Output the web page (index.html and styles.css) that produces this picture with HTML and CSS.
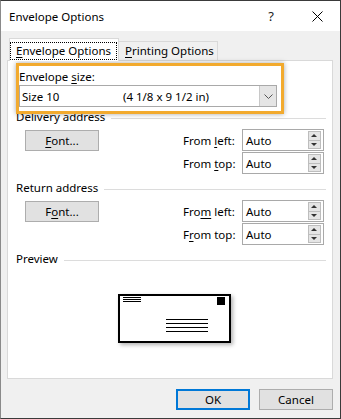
FILE: index.html
```html
<!DOCTYPE html>
<html lang="en">
<head>
    <meta charset="UTF-8">
    <title>Envelope Options</title>
    <link rel="stylesheet" href="styles.css">
</head>
<body>
    <div class="window">
        <div class="titlebar">
            <span class="title">Envelope Options</span>
            <span class="caption-btn">?</span>
            <span class="caption-btn">
                <svg width="11" height="11" viewBox="0 0 11 11"><path d="M0.5 0.5 L10.5 10.5 M10.5 0.5 L0.5 10.5" stroke="#000" stroke-width="1"/></svg>
            </span>
        </div>

        <div class="client">
            <div class="tabs">
                <div class="tab active"><span class="focus"><u>E</u>nvelope Options</span></div>
                <div class="tab"><u>P</u>rinting Options</div>
            </div>

            <div class="panel">
                <div class="highlight">
                    <div class="size-label">Envelope <u>s</u>ize:</div>
                    <div class="select">
                        <span class="select-name">Size 10</span>
                        <span class="select-dim">(4 1/8 x 9 1/2 in)</span>
                        <span class="drop-btn">
                            <svg width="9" height="5" viewBox="0 0 9 5"><path d="M0.5 0.5 L4.5 4.5 L8.5 0.5" fill="none" stroke="#555" stroke-width="1"/></svg>
                        </span>
                    </div>
                </div>

                <div class="group">
                    <div class="group-head"><span>Delivery address</span><span class="rule"></span></div>
                    <div class="fields">
                        <button class="btn font-btn"><u>F</u>ont...</button>
                        <span class="field-label">From <u>l</u>eft:</span>
                        <div class="spin-field"><span class="value">Auto</span><span class="spin"><i class="up"></i><i class="down"></i></span></div>
                        <span class="field-label">From <u>t</u>op:</span>
                        <div class="spin-field"><span class="value">Auto</span><span class="spin"><i class="up"></i><i class="down"></i></span></div>
                    </div>
                </div>

                <div class="group">
                    <div class="group-head"><span>Return address</span><span class="rule"></span></div>
                    <div class="fields">
                        <button class="btn font-btn">F<u>o</u>nt...</button>
                        <span class="field-label">Fro<u>m</u> left:</span>
                        <div class="spin-field"><span class="value">Auto</span><span class="spin"><i class="up"></i><i class="down"></i></span></div>
                        <span class="field-label">F<u>r</u>om top:</span>
                        <div class="spin-field"><span class="value">Auto</span><span class="spin"><i class="up"></i><i class="down"></i></span></div>
                    </div>
                </div>

                <div class="group">
                    <div class="group-head"><span>Preview</span><span class="rule"></span></div>
                    <div class="envelope">
                        <svg width="113" height="49" viewBox="0 0 113 49">
                            <rect x="1" y="1" width="111" height="47" fill="#fff" stroke="#000" stroke-width="2"/>
                            <path d="M5 3.5 H23 M5 5.5 H23 M5 7.5 H23" stroke="#000" stroke-width="1"/>
                            <rect x="99" y="3" width="8" height="8" fill="#000"/>
                            <path d="M48 25.5 H90 M48 29.5 H90 M48 33.5 H90 M48 37.5 H90" stroke="#000" stroke-width="1.2"/>
                        </svg>
                    </div>
                </div>
            </div>

            <div class="actions">
                <button class="btn default">OK</button>
                <button class="btn">Cancel</button>
            </div>
        </div>
    </div>
</body>
</html>
```

FILE: styles.css
```css
body {
    margin: 0;
    font-family: "Noto Sans", "Open Sans", sans-serif;
    font-size: 11.5px;
    color: #000;
}
u {
    text-decoration-thickness: 1px;
    text-underline-offset: 2px;
}
.window {
    width: 341px;
    height: 419px;
    box-sizing: border-box;
    border: 1px solid #3a3a3a;
    border-left-color: #8a8a8a;
    display: flex;
    flex-direction: column;
}
.titlebar {
    height: 30px;
    background-color: #fff;
    display: flex;
    align-items: center;
    padding-left: 8px;
    font-size: 11.5px;
}
.title {
    flex: 1;
}
.caption-btn {
    width: 46px;
    height: 30px;
    display: flex;
    align-items: center;
    justify-content: center;
    font-size: 13px;
    color: #222;
}
.client {
    flex: 1;
    background-color: #f0f0f0;
    padding: 7px 7px 0 6px;
}
.tabs {
    display: flex;
    align-items: flex-end;
    height: 22px;
    padding-left: 2px;
}
.tab {
    box-sizing: border-box;
    width: 100px;
    height: 19px;
    margin-left: -1px;
    border: 1px solid #d9d9d9;
    border-bottom: none;
    background-color: #f0f0f0;
    padding-left: 6px;
    line-height: 18px;
    white-space: nowrap;
}
.tab.active {
    width: 110px;
    height: 23px;
    margin-left: 0;
    margin-bottom: -1px;
    background-color: #fff;
    position: relative;
    z-index: 2;
    padding: 3px 0 0 1px;
}
.focus {
    display: inline-block;
    outline: 1px dotted #000;
    padding: 0 5px 0 5px;
    line-height: 16px;
}
.panel {
    box-sizing: border-box;
    height: 319px;
    background-color: #fff;
    border: 1px solid #d9d9d9;
    position: relative;
    z-index: 1;
}
.highlight {
    box-sizing: border-box;
    width: 268px;
    height: 51px;
    margin: 2px 0 -5px 8px;
    border: 3px solid #f2aa2e;
    box-shadow: 0 0 5px rgba(0, 0, 0, 0.35);
    position: relative;
    z-index: 1;
    background-color: #fff;
}
.size-label {
    line-height: 16px;
    margin-top: 3px;
}
.select {
    box-sizing: border-box;
    display: flex;
    align-items: center;
    width: 258px;
    height: 22px;
    border: 1px solid #a9a9a9;
}
.select-name {
    width: 101px;
    padding-left: 2px;
}
.select-dim {
    flex: 1;
}
.drop-btn {
    width: 16px;
    height: 20px;
    background-color: #e5e5e5;
    border-left: 1px solid #c8c8c8;
    display: flex;
    align-items: center;
    justify-content: center;
}
.group {
    padding-left: 8px;
}
.group-head {
    display: flex;
    align-items: center;
    line-height: 16px;
    padding-right: 6px;
}
.rule {
    flex: 1;
    border-top: 1px solid #dcdcdc;
    margin-left: 6px;
    margin-top: 2px;
}
.fields {
    display: grid;
    grid-template-columns: 167px 59px 82px;
    grid-template-rows: 22px 22px;
    row-gap: 1px;
    margin-top: 4px;
    margin-bottom: 6px;
    align-items: center;
}
.btn {
    font-family: inherit;
    font-size: 11.5px;
    color: #000;
    background-color: #e1e1e1;
    border: 1px solid #adadad;
    padding: 0;
    width: 74px;
    height: 21px;
}
.font-btn {
    grid-row: 1;
    margin-left: 9px;
    margin-top: 1px;
}
.field-label {
    grid-column: 2;
}
.spin-field {
    grid-column: 3;
    box-sizing: border-box;
    height: 22px;
    border: 1px solid #a9a9a9;
    display: flex;
    align-items: center;
}
.value {
    flex: 1;
    padding-left: 3px;
}
.spin {
    width: 13px;
    height: 18px;
    margin-right: 2px;
    display: flex;
    flex-direction: column;
}
.spin i {
    flex: 1;
    background-color: #e5e5e5;
    border: 1px solid #bdbdbd;
    position: relative;
}
.spin .down {
    border-top: none;
}
.spin i::after {
    content: "";
    position: absolute;
    left: 2px;
    top: 2px;
    border-left: 3px solid transparent;
    border-right: 3px solid transparent;
}
.spin .up::after {
    border-bottom: 3px solid #333;
}
.spin .down::after {
    top: 2px;
    border-top: 3px solid #333;
}
.envelope {
    margin: 27px 0 0 102px;
    width: 113px;
    height: 49px;
    box-shadow: 2px 2px 4px rgba(0, 0, 0, 0.3);
}
.envelope svg {
    display: block;
}
.actions {
    display: flex;
    justify-content: flex-end;
    gap: 9px;
    margin-top: 10px;
}
.btn.default {
    border: 2px solid #0078d7;
}
```
